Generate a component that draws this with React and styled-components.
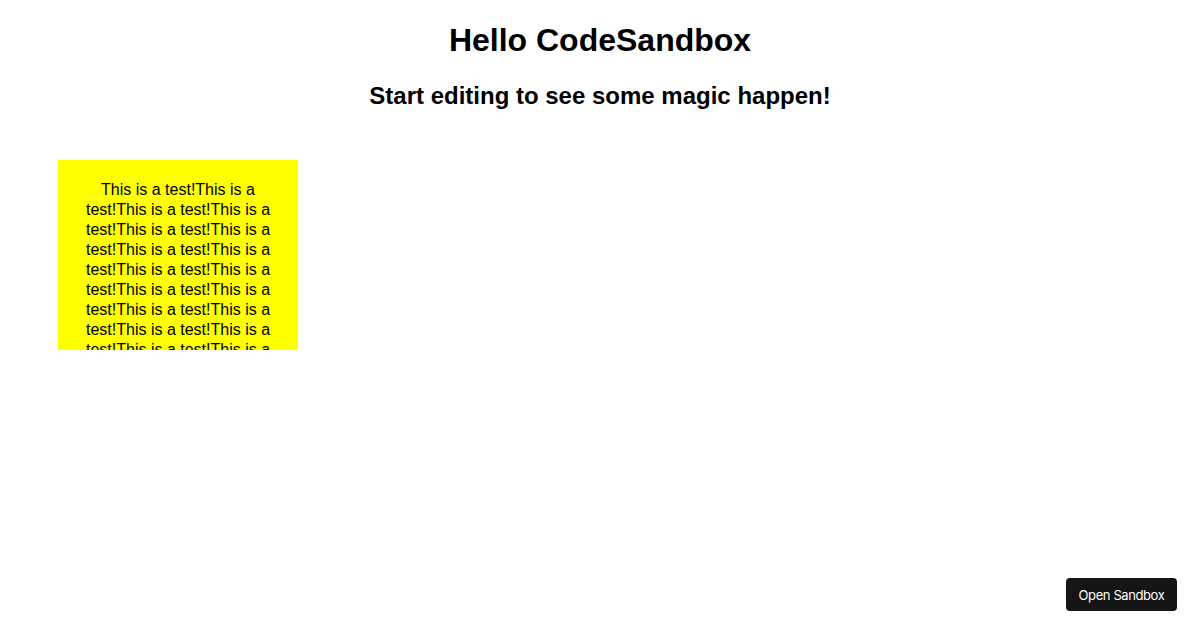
import React from 'react'
import styled, { createGlobalStyle } from 'styled-components'

const GlobalStyle = createGlobalStyle`
body {
    margin: 8px;
    background: #fff;
    font-family: "Liberation Sans", Arial, sans-serif;
}
`

const Container = styled.div`
text-align: center;
`

const Title = styled.h1`
font-size: 32px;
margin: 14px 0 23px;
`

const Subtitle = styled.h2`
font-size: 24px;
margin: 20px 0;
`

const TestBox = styled.div`
box-sizing: border-box;
width: 240px;
height: 190px;
margin: 50px 50px 0;
padding: 20px;
background: yellow;
font-size: 16px;
line-height: 20px;
overflow: hidden;
`

const OpenButton = styled.a`
position: fixed;
right: 23px;
bottom: 19px;
box-sizing: border-box;
display: flex;
align-items: center;
justify-content: center;
width: 111px;
height: 33px;
border-radius: 4px;
background: #151515;
color: #fff;
font-family: Inter, "Liberation Sans", sans-serif;
font-size: 13px;
letter-spacing: -0.4px;
text-decoration: none;
cursor: pointer;
`

export default function App() {
    const text = 'This is a test!'.repeat(30)

    return (
        <Container>
            <GlobalStyle />

            <Title>Hello CodeSandbox</Title>

            <Subtitle>Start editing to see some magic happen!</Subtitle>

            <TestBox>{text}</TestBox>

            <OpenButton>Open Sandbox</OpenButton>
        </Container>
    )
}
